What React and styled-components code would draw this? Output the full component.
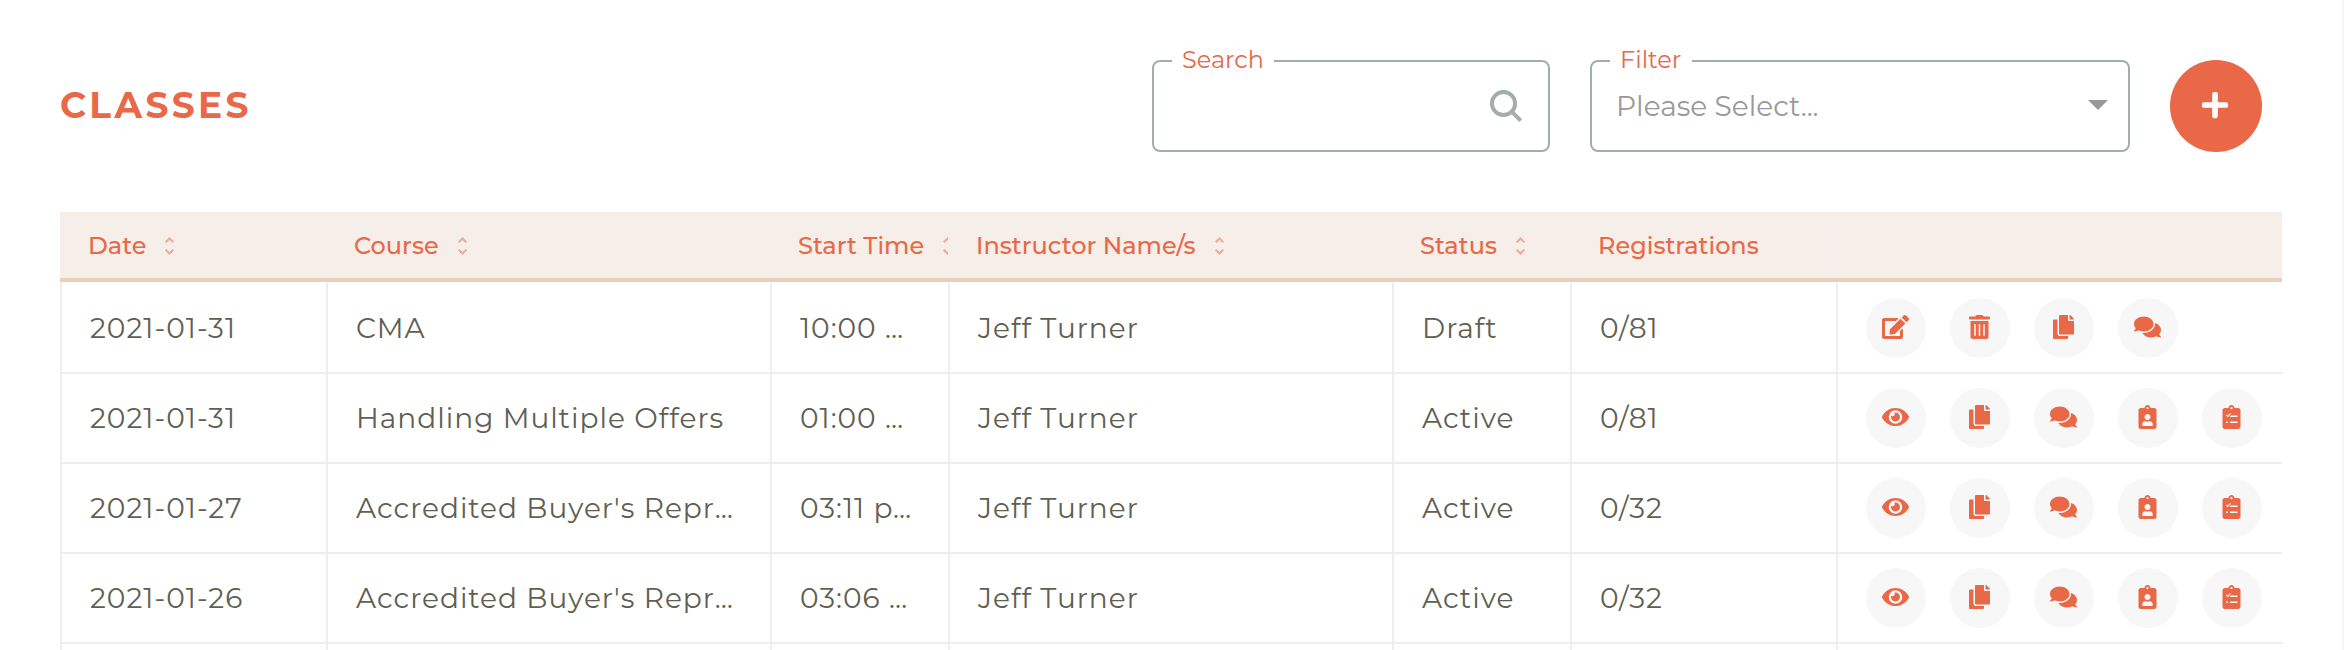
import React from 'react';
import styled, { createGlobalStyle } from 'styled-components';
import { FaPlus, FaEdit, FaTrashAlt, FaCopy, FaComments, FaEye } from 'react-icons/fa';

const orange = '#e86847';

const columns = [
  { label: 'Date', sortable: true },
  { label: 'Course', sortable: true },
  { label: 'Start Time', sortable: true },
  { label: 'Instructor Name/s', sortable: true },
  { label: 'Status', sortable: true },
  { label: 'Registrations' },
  { label: '', divider: true },
];

const draftActions = ['edit', 'trash', 'copy', 'comments'];
const activeActions = ['view', 'copy', 'comments', 'roster', 'tasks'];

const rows = [
  {
    id: 1,
    cells: ['2021-01-31', 'CMA', '10:00 …', 'Jeff Turner', 'Draft', '0/81'],
    actions: draftActions,
  },
  {
    id: 2,
    cells: ['2021-01-31', 'Handling Multiple Offers', '01:00 …', 'Jeff Turner', 'Active', '0/81'],
    actions: activeActions,
  },
  {
    id: 3,
    cells: ['2021-01-27', "Accredited Buyer's Repr…", '03:11 p…', 'Jeff Turner', 'Active', '0/32'],
    actions: activeActions,
  },
  {
    id: 4,
    cells: ['2021-01-26', "Accredited Buyer's Repr…", '03:06 …', 'Jeff Turner', 'Active', '0/32'],
    actions: activeActions,
  },
  { id: 5, cells: ['', '', '', '', '', ''], actions: [] },
];

const clipboard =
  'M336 64h-80c0-35.3-28.7-64-64-64s-64 28.7-64 64H48C21.5 64 0 85.5 0 112v352c0 26.5 21.5 48 48 48h288c26.5 0 48-21.5 48-48V112c0-26.5-21.5-48-48-48zM192 40c13.3 0 24 10.7 24 24s-10.7 24-24 24-24-10.7-24-24 10.7-24 24-24z';

const RosterIcon = () => (
  <svg viewBox="0 0 384 512" fill="currentColor">
    <path
      fillRule="evenodd"
      d={`${clipboard}M192 192c-35.3 0-64 28.7-64 64s28.7 64 64 64 64-28.7 64-64-28.7-64-64-64zM304 425.6v-19.2c0-31.8-30.1-57.6-67.2-57.6h-5c-12.3 5.1-25.7 8-39.8 8s-27.6-2.9-39.8-8h-5c-37.1 0-67.2 25.8-67.2 57.6v19.2c0 12.4 10 22.4 22.4 22.4h179.2c12.4 0 22.4-10 22.4-22.4z`}
    />
  </svg>
);

const TasksIcon = () => (
  <svg viewBox="0 0 384 512" fill="currentColor">
    <path fillRule="evenodd" d={`${clipboard}M160 352h160v32H160zM176 224h144v32H152zM76 352h40v32H76z`} />
    <path d="M78 212l34 32 60-66" fill="none" stroke="#f7f7f7" strokeWidth="24" />
  </svg>
);

const SearchIcon = () => (
  <svg width="34" height="34" viewBox="0 0 34 34" fill="none" stroke="currentColor" strokeWidth="4">
    <circle cx="13.5" cy="13.5" r="11.6" />
    <path d="M21.7 21.7l9 9" />
  </svg>
);

const SortIcon = () => (
  <SortSvg width="9" height="18" viewBox="0 0 9 18">
    <path d="M.7 5.2L4.5 1.5l3.8 3.7M.7 12.8l3.8 3.7 3.8-3.7" />
  </SortSvg>
);

const icons = {
  edit: FaEdit,
  trash: FaTrashAlt,
  copy: FaCopy,
  comments: FaComments,
  view: FaEye,
  roster: RosterIcon,
  tasks: TasksIcon,
};

const App = () => {
  return (
    <Page>
      <GlobalStyle />
      <Toolbar>
        <Title>CLASSES</Title>
        <Field $width={398}>
          <FieldLabel $width={102}>Search</FieldLabel>
          <SearchIcon />
        </Field>
        <Field $width={540}>
          <FieldLabel $width={82}>Filter</FieldLabel>
          <Placeholder>Please Select...</Placeholder>
          <Caret />
        </Field>
        <AddButton aria-label="Add class">
          <FaPlus />
        </AddButton>
      </Toolbar>
      <Table>
        <HeaderRow>
          {columns.map(({ label, sortable, divider }) => (
            <HeaderCell key={label} $divider={divider}>
              {label}
              {sortable && <SortIcon />}
            </HeaderCell>
          ))}
        </HeaderRow>
        {rows.map(row => (
          <Row key={row.id}>
            {row.cells.map((text, i) => (
              <Cell key={i}>{text}</Cell>
            ))}
            <ActionsCell>
              {row.actions.map(name => {
                const Icon = icons[name];
                return (
                  <ActionButton key={name} aria-label={name}>
                    <Icon />
                  </ActionButton>
                );
              })}
            </ActionsCell>
          </Row>
        ))}
      </Table>
    </Page>
  );
};

export default App;


const GlobalStyle = createGlobalStyle`
  *, *::before, *::after {
    box-sizing: border-box;
  }
  body {
    margin: 0;
    background: #fff;
    font-family: Montserrat, Inter, sans-serif;
  }
`

const Page = styled.div`
  height: 650px;
  overflow: hidden;
  padding: 60px 60px 0;
  border-right: 2px solid #f7f7f7;
`

const Toolbar = styled.div`
  display: flex;
  align-items: center;
  gap: 40px;
  height: 92px;
  padding-right: 20px;
`

const Title = styled.h1`
  flex: 1;
  margin: 0;
  padding-bottom: 2px;
  font-size: 36px;
  font-weight: 700;
  letter-spacing: 3.3px;
  color: ${orange};
`

const Field = styled.div`
  position: relative;
  display: flex;
  align-items: center;
  justify-content: flex-end;
  width: ${props => props.$width}px;
  height: 92px;
  padding: 0 20px 0 24px;
  border: 2px solid #a5adab;
  border-radius: 8px;
  color: #a5adab;
  > svg {
    margin-right: 4px;
    margin-top: 2px;
  }
`

const FieldLabel = styled.label`
  position: absolute;
  top: -17px;
  left: 18px;
  width: ${props => props.$width}px;
  padding-left: 10px;
  background: #fff;
  font-size: 24px;
  line-height: 30px;
  color: ${orange};
`

const Placeholder = styled.span`
  flex: 1;
  font-size: 28px;
  color: #999;
`

const Caret = styled.span`
  border: 10px solid transparent;
  border-top-color: #999;
  border-bottom: 0;
  margin-bottom: 2px;
`

const AddButton = styled.button`
  display: flex;
  align-items: center;
  justify-content: center;
  width: 92px;
  height: 92px;
  padding: 0 2px 3px 0;
  border: 0;
  border-radius: 50%;
  background: ${orange};
  color: #fff;
  font-size: 30px;
`

const Table = styled.div`
  margin-top: 60px;
`

const HeaderRow = styled.div`
  display: grid;
  grid-template-columns: 266px 444px 178px 444px 178px 266px 446px;
  height: 70px;
  background: #f6eee9;
  border-bottom: 4px solid #ebcfb9;
`

const HeaderCell = styled.div`
  display: flex;
  align-items: center;
  overflow: hidden;
  padding-left: 28px;
  font-size: 24px;
  font-weight: 500;
  white-space: nowrap;
  color: ${orange};
  box-shadow: ${props => (props.$divider ? 'inset 2px 0 #f2eeea' : 'none')};
`

const SortSvg = styled.svg`
  flex: none;
  margin: 2px 0 0 19px;
  fill: none;
  stroke: ${orange};
  stroke-width: 2;
  opacity: 0.5;
`

const Row = styled.div`
  display: grid;
  grid-template-columns: 266px 444px 178px 444px 178px 266px 446px;
  height: 90px;
  border-bottom: 2px solid #eee;
  ${HeaderRow} + & {
    height: 92px;
  }
`

const Cell = styled.div`
  display: flex;
  align-items: center;
  overflow: hidden;
  padding-left: 28px;
  border-left: 2px solid #eee;
  font-size: 28px;
  letter-spacing: 1px;
  white-space: nowrap;
  color: #5f5f52;
  ${HeaderRow} + ${Row} > & {
    padding-top: 2px;
  }
`

const ActionsCell = styled.div`
  display: flex;
  align-items: center;
  gap: 24px;
  padding-left: 28px;
  border-left: 2px solid #eee;
  ${HeaderRow} + ${Row} > & {
    padding-top: 2px;
  }
`

const ActionButton = styled.button`
  display: flex;
  align-items: center;
  justify-content: center;
  width: 60px;
  height: 60px;
  padding: 0 1px 2px 0;
  border: 0;
  border-radius: 50%;
  background: #f7f7f7;
  color: ${orange};
  /* as wide as the widest icon, narrower ones are centered */
  > svg {
    flex: none;
    width: 27px;
    height: 24px;
  }
`
